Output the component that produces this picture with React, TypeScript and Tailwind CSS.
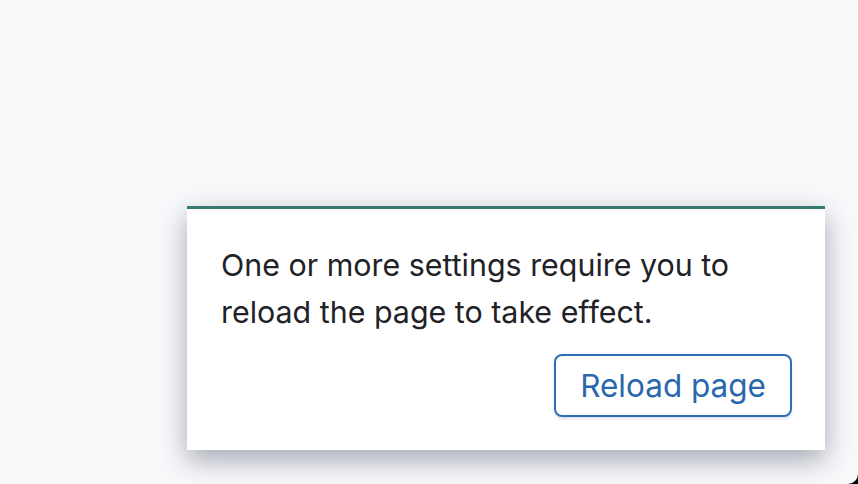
import React from 'react';

// Toast shown when a setting needs a page reload
const ReloadToast = () => (
  <div className="w-[638px] bg-white border-t-[3px] border-[#367b70] shadow-[0_10px_26px_rgba(40,46,70,0.4)] pl-[34px] pr-[33px] pt-[33px] pb-[33px]">
    <p className="text-[30.4px] leading-[47px] text-[#1f2226]">
      One or more settings require you to reload the page to take effect.
    </p>
    <div className="flex justify-end mt-[18px]">
      <button className="h-[63px] px-[24px] border-2 border-[#2f6db5] rounded-[8px] text-[31.5px] text-[#2b67ad] bg-white shadow-[0_2px_3px_rgba(40,60,100,0.15)]">
        Reload page
      </button>
    </div>
  </div>
);

export default function App() {
  return (
    <div className="h-screen w-full bg-black" style={{ fontFamily: 'Inter, "Noto Sans", sans-serif' }}>
      <div className="h-full w-full bg-[#f8f9fb] rounded-br-[10px] flex justify-end items-end pr-[33px] pb-[34px]">
        <ReloadToast />
      </div>
    </div>
  );
}
